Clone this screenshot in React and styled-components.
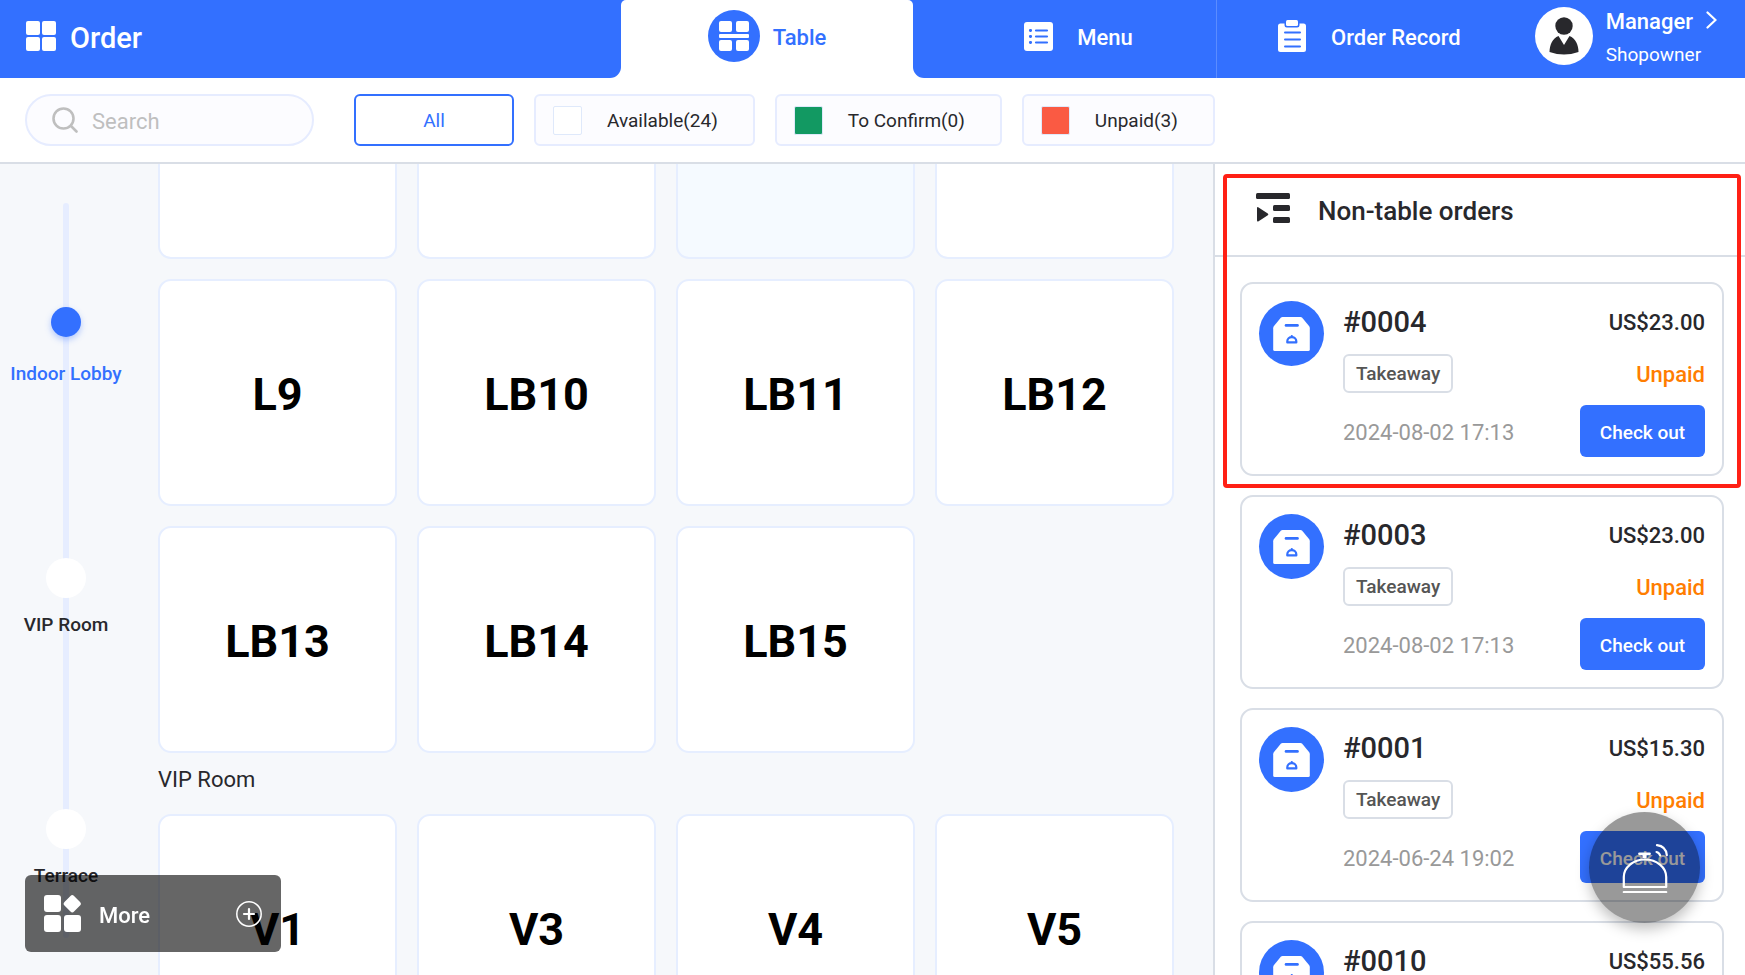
import React, { useLayoutEffect, useRef } from 'react';
import styled, { createGlobalStyle } from 'styled-components';

const areas = ['Indoor Lobby', 'VIP Room', 'Terrace'];

const lobbyTables = [
  { name: 'L5' },
  { name: 'L6' },
  { name: 'L7', tinted: true },
  { name: 'L8' },
  { name: 'L9' },
  { name: 'LB10' },
  { name: 'LB11' },
  { name: 'LB12' },
  { name: 'LB13' },
  { name: 'LB14' },
  { name: 'LB15' },
];

const vipTables = [{ name: 'V1' }, { name: 'V3' }, { name: 'V4' }, { name: 'V5' }];

const filters = [
  { label: 'Available(24)', color: '#ffffff' },
  { label: 'To Confirm(0)', color: '#129962' },
  { label: 'Unpaid(3)', color: '#fa5a43' },
];

const orders = [
  { id: '#0004', price: 'US$23.00', time: '2024-08-02 17:13' },
  { id: '#0003', price: 'US$23.00', time: '2024-08-02 17:13' },
  { id: '#0001', price: 'US$15.30', time: '2024-06-24 19:02' },
  { id: '#0010', price: 'US$55.56', time: '2024-06-24 19:02' },
];

const GridIcon = () => (
  <svg width="30" height="30" viewBox="0 0 30 30" fill="#fff">
    <rect x="0" y="0" width="14" height="14" rx="2" />
    <rect x="16" y="0" width="14" height="14" rx="2" />
    <rect x="0" y="16" width="14" height="14" rx="2" />
    <rect x="16" y="16" width="14" height="14" rx="2" />
  </svg>
)

const TableIcon = () => (
  <svg width="30" height="30" viewBox="0 0 30 30" fill="#fff">
    <rect x="0" y="0" width="13" height="11" rx="2" />
    <rect x="17" y="0" width="13" height="11" rx="2" />
    <rect x="0" y="13" width="30" height="4" rx="1" />
    <rect x="0" y="19" width="13" height="11" rx="2" />
    <rect x="17" y="19" width="13" height="11" rx="2" />
  </svg>
)

const MenuIcon = () => (
  <svg width="29" height="29" viewBox="0 0 29 29" fill="none">
    <rect width="29" height="29" rx="3" fill="#fff" />
    <g stroke="#3370ff" strokeWidth="2.2" strokeLinecap="round">
      <path d="M12 8.5h11M12 14.5h11M12 20.5h11" />
      <path d="M6.3 8.5h.4M6.3 14.5h.4M6.3 20.5h.4" strokeWidth="2.8" />
    </g>
  </svg>
)

const RecordIcon = () => (
  <svg width="28" height="32" viewBox="0 0 28 32" fill="none">
    <path
      d="M2.5 3.5H6.5V5.2q0 2.3 2.3 2.3h10.4q2.3 0 2.3-2.3V3.5h4Q28 3.5 28 6v23.5q0 2.5-2.5 2.5h-23Q0 32 0 29.5V6q0-2.5 2.5-2.5Z"
      fill="#fff"
    />
    <rect x="8" y="0" width="12" height="6" rx="1.5" fill="#fff" />
    <path d="M7 12.5h15M7 19.5h15M7 26.5h15" stroke="#3370ff" strokeWidth="2" strokeLinecap="round" />
  </svg>
)

const PersonIcon = () => (
  <svg width="30" height="38" viewBox="0 0 30 38" fill="#28282c">
    <circle cx="15" cy="9" r="8.7" />
    <path d="M9.5 19 15 28l5.5-9C26.5 21.5 29.5 28 29.5 35Q22 37.6 15 37.6T.5 35C.5 28 3.5 21.5 9.5 19Z" />
  </svg>
)

const ChevronIcon = () => (
  <svg width="11" height="18" viewBox="0 0 11 18" fill="none">
    <path d="m1.5 1.5 8 7.5-8 7.5" stroke="#fff" strokeWidth="2.2" strokeLinecap="round" />
  </svg>
)

const SearchIcon = () => (
  <svg width="26" height="26" viewBox="0 0 26 26" fill="none" stroke="#bfbfbf" strokeWidth="2.6" strokeLinecap="round">
    <circle cx="11.5" cy="11.5" r="10" />
    <path d="m19 19 5.5 5.5" />
  </svg>
)

const CollapseIcon = () => (
  <svg width="34" height="30" viewBox="0 0 34 30" fill="#28282c">
    <rect x="0" y="0" width="34" height="6" rx="1.5" />
    <rect x="17" y="12" width="17" height="6" rx="1.5" />
    <rect x="17" y="24" width="17" height="6" rx="1.5" />
    <path d="M1 15.3q0-2 1.6-.9l9.2 6q1.2.9 0 1.8l-9.2 6Q1 29.2 1 27.3Z" />
  </svg>
)

const BagIcon = () => (
  <svg width="37" height="34" viewBox="0 0 37 34" fill="none">
    <path d="M9.5 0h18q1 0 1.7.8L36 9q.8 1 .8 2.2V32.5q0 1.5-1.5 1.5H1.7Q.2 34 .2 32.5V11.2Q.2 10 1 9L7.8.8Q8.5 0 9.5 0Z" fill="#fff" />
    <path d="M13 8.4h11.5" stroke="#3370ff" strokeWidth="2.6" strokeLinecap="round" />
    <path
      d="M14.3 25.4v-1.2a4.5 4 0 0 1 9 0v1.2ZM18.8 19v1"
      stroke="#3370ff"
      strokeWidth="2.2"
      strokeLinejoin="round"
      strokeLinecap="round"
    />
  </svg>
)

const MoreIcon = () => (
  <svg width="37" height="37" viewBox="0 0 37 37" fill="#fff">
    <rect x="0" y="0" width="17" height="17" rx="3" />
    <rect x="0" y="20" width="17" height="17" rx="3" />
    <rect x="20" y="20" width="17" height="17" rx="3" />
    <rect x="21.5" y="2" width="13.5" height="13.5" rx="2.5" transform="rotate(45 28.25 8.75)" />
  </svg>
)

const PlusIcon = () => (
  <svg width="26" height="26" viewBox="0 0 26 26" fill="none" stroke="#fff">
    <circle cx="13" cy="13" r="12.2" strokeWidth="1.5" />
    <path d="M13 8v10M8 13h10" strokeWidth="2.2" strokeLinecap="round" />
  </svg>
)

const BellIcon = () => (
  <svg width="46" height="50" viewBox="0 0 46 50" fill="none" stroke="#fff" strokeWidth="2.2" strokeLinecap="round">
    <path d="M1.8 44V34a21.2 17.5 0 0 1 42.4 0v10Z" strokeLinejoin="round" />
    <path d="M1.8 49h42.4" />
    <path d="M17.5 10.8h10" strokeWidth="2.8" />
    <path d="M22.5 11.5v3.5" strokeWidth="4" strokeLinecap="butt" />
    <path d="M34.5 9q2.8.6 3.6 3.5M35 2.2q8.8 1 9.8 10" />
  </svg>
)

function OrderCard({ order }) {
  return (
    <Card>
      <BagCircle><BagIcon /></BagCircle>
      <CardBody>
        <CardRow>
          <OrderId>{order.id}</OrderId>
          <Price>{order.price}</Price>
        </CardRow>
        <CardRow>
          <Tag>Takeaway</Tag>
          <Status>Unpaid</Status>
        </CardRow>
        <CardRow>
          <Time>{order.time}</Time>
          <CheckOut type="button">Check out</CheckOut>
        </CardRow>
      </CardBody>
    </Card>
  )
}

function TableGrid({ tables }) {
  return (
    <Tables>
      {tables.map((t) => (
        <TableCard type="button" key={t.name} $tinted={t.tinted}>{t.name}</TableCard>
      ))}
    </Tables>
  )
}

function App() {
  const floor = useRef(null);

  useLayoutEffect(() => {
    floor.current.scrollTop = 132;
  }, []);

  return (
    <Page>
      <GlobalStyle />
      <Header>
        <Brand><GridIcon /><Label>Order</Label></Brand>
        <ActiveSlot>
          <ActiveTab type="button">
            <TabCircle><TableIcon /></TabCircle>
            <Label>Table</Label>
          </ActiveTab>
        </ActiveSlot>
        <MenuTab type="button"><MenuIcon /><Label>Menu</Label></MenuTab>
        <RecordTab type="button"><RecordIcon /><Label>Order Record</Label></RecordTab>
        <Account type="button">
          <Avatar><PersonIcon /></Avatar>
          <AccountText>
            <Name><Label>Manager</Label><ChevronIcon /></Name>
            <Role>Shopowner</Role>
          </AccountText>
        </Account>
      </Header>

      <Toolbar>
        <Search>
          <SearchIcon />
          <SearchInput type="text" placeholder="Search" aria-label="Search" />
        </Search>
        <Filters>
          <AllButton type="button">All</AllButton>
          {filters.map((f) => (
            <FilterButton type="button" key={f.label}>
              <Swatch $color={f.color} />
              {f.label}
            </FilterButton>
          ))}
        </Filters>
      </Toolbar>

      <Main>
        <AreaNav>
          {areas.map((area, i) => (
            <AreaButton type="button" key={area} $active={i === 0}>
              <DotSlot><Dot $active={i === 0} /></DotSlot>
              {area}
            </AreaButton>
          ))}
        </AreaNav>

        <Floor ref={floor}>
          <TableGrid tables={lobbyTables} />
          <SectionTitle>VIP Room</SectionTitle>
          <TableGrid tables={vipTables} />
        </Floor>

        <Panel>
          <PanelHeader>
            <CollapseIcon />
            <PanelTitle>Non-table orders</PanelTitle>
          </PanelHeader>
          <OrderList>
            {orders.map((o) => <OrderCard key={o.id} order={o} />)}
          </OrderList>
          <Highlight />
        </Panel>
      </Main>

      <MoreButton type="button">
        <MoreIcon />
        <MoreLabel>More</MoreLabel>
        <PlusIcon />
      </MoreButton>
      <BellButton type="button" aria-label="Call bell"><BellIcon /></BellButton>
    </Page>
  )
}

export default App

const GlobalStyle = createGlobalStyle`
  * {
    box-sizing: border-box;
  }

  body {
    margin: 0;
    font-family: Roboto, "Liberation Sans", sans-serif;
    color: #28282c;
  }

  button {
    margin: 0;
    padding: 0;
    border: 0;
    background: none;
    color: inherit;
    font: inherit;
    cursor: pointer;
  }

  svg {
    display: block;
    flex-shrink: 0;
  }
`

const Page = styled.div`
  display: flex;
  flex-direction: column;
  height: 100vh;
  overflow: hidden;
  background: #f6f8fb;
`

const Label = styled.span`
  padding-top: 3px;
`

const Header = styled.header`
  display: flex;
  flex-shrink: 0;
  height: 78px;
  background: #fff;
  font-size: 22px;
  font-weight: 500;
`

const Brand = styled.div`
  flex: 1;
  display: flex;
  align-items: center;
  gap: 14px;
  padding: 0 26px 6px;
  background: #3370ff;
  border-bottom-right-radius: 11px;
  color: #fff;
  font-size: 29px;
`

const ActiveSlot = styled.div`
  display: flex;
  width: 292px;
  background: linear-gradient(#3370ff 8px, #fff 8px);
`

const ActiveTab = styled.button`
  flex: 1;
  display: flex;
  align-items: center;
  justify-content: center;
  gap: 13px;
  padding-bottom: 6px;
  background: #fff;
  border-radius: 5px 5px 0 0;
  color: #3370ff;
`

const TabCircle = styled.span`
  display: flex;
  align-items: center;
  justify-content: center;
  width: 52px;
  height: 52px;
  border-radius: 50%;
  background: #3370ff;
`

const MenuTab = styled.button`
  display: flex;
  align-items: center;
  justify-content: center;
  gap: 24px;
  width: 304px;
  padding: 0 0 6px 28px;
  background: #3370ff;
  border-right: 1px solid #5b8cff;
  border-bottom-left-radius: 11px;
  color: #fff;
`

const RecordTab = styled.button`
  display: flex;
  align-items: center;
  gap: 25px;
  padding: 0 74px 6px 61px;
  background: #3370ff;
  color: #fff;
`

const Account = styled.button`
  display: flex;
  align-items: center;
  gap: 13px;
  padding: 0 28px 6px 0;
  background: #3370ff;
  color: #fff;
  text-align: left;
`

const Avatar = styled.span`
  display: flex;
  align-items: center;
  justify-content: center;
  width: 58px;
  height: 58px;
  border-radius: 50%;
  background: #fff;
`

const AccountText = styled.span`
  display: flex;
  flex-direction: column;
  gap: 8px;
`

const Name = styled.span`
  display: flex;
  align-items: center;
  gap: 13px;
  line-height: 26px;
`

const Role = styled.span`
  font-size: 19px;
  font-weight: 400;
  line-height: 24px;
`

const Toolbar = styled.div`
  display: flex;
  flex-shrink: 0;
  gap: 40px;
  padding: 16px 25px;
  background: #fff;
  border-bottom: 2px solid #d9dee6;
`

const Search = styled.label`
  display: flex;
  align-items: center;
  gap: 14px;
  width: 289px;
  height: 52px;
  padding: 0 25px;
  background: #fcfcff;
  border: 2px solid #e6ecff;
  border-radius: 26px;
`

const SearchInput = styled.input`
  flex: 1;
  min-width: 0;
  padding: 3px 0 0;
  border: 0;
  outline: 0;
  background: none;
  font-family: inherit;
  font-size: 22px;
  color: #28282c;

  &::placeholder {
    color: #bfbfbf;
  }
`

const Filters = styled.div`
  display: flex;
  gap: 20px;
`

const AllButton = styled.button`
  width: 160px;
  height: 52px;
  padding-top: 1px;
  background: #fff;
  border: 2px solid #3370ff;
  border-radius: 6px;
  color: #3370ff;
  font-size: 19px;
`

const FilterButton = styled.button`
  display: flex;
  align-items: center;
  gap: 25px;
  height: 52px;
  padding: 0 35px 0 17px;
  background: #fcfcff;
  border: 2px solid #e6ecff;
  border-radius: 6px;
  font-size: 19px;
`

const Swatch = styled.span`
  width: 29px;
  height: 29px;
  background: ${(p) => p.$color};
  border: 1px solid #dfe9fb;
  border-radius: 2px;
`

const Main = styled.main`
  display: flex;
  flex: 1;
  min-height: 0;
`

const AreaNav = styled.nav`
  position: relative;
  flex-shrink: 0;
  width: 132px;
  padding-top: 143px;

  &::before {
    content: "";
    position: absolute;
    top: 39px;
    left: 63px;
    width: 6px;
    height: 735px;
    border-radius: 3px;
    background: #e6edff;
  }
`

const AreaButton = styled.button`
  position: relative;
  display: flex;
  flex-direction: column;
  align-items: center;
  gap: 15px;
  width: 100%;
  height: 251px;
  color: ${(p) => (p.$active ? '#3370ff' : '#28282c')};
  font-size: 19px;
  font-weight: 500;
  line-height: 24px;
  white-space: nowrap;
`

const DotSlot = styled.span`
  height: 40px;
`

const Dot = styled.span`
  display: block;
  width: ${(p) => (p.$active ? 30 : 40)}px;
  height: ${(p) => (p.$active ? 30 : 40)}px;
  border-radius: 50%;
  background: ${(p) => (p.$active ? '#3370ff' : '#fff')};
  box-shadow: ${(p) => (p.$active ? '0 3px 6px rgba(51, 112, 255, .35)' : 'none')};
`

const Floor = styled.section`
  flex: 1;
  min-width: 0;
  padding: 0 39px 0 26px;
  overflow-y: auto;
  scrollbar-width: none;
`

const Tables = styled.div`
  display: grid;
  grid-template-columns: repeat(4, 1fr);
  gap: 20px;
`

const TableCard = styled.button`
  height: 227px;
  padding-top: 4px;
  background: ${(p) => (p.$tinted ? '#f5faff' : '#fff')};
  border: 2px solid #e6eeff;
  border-radius: 13px;
  color: #000;
  font-size: 45px;
  font-weight: 700;
`

const SectionTitle = styled.h2`
  margin: 0;
  padding: 14px 0 21px;
  font-size: 22px;
  font-weight: 400;
  line-height: 26px;
`

const Panel = styled.aside`
  position: relative;
  flex-shrink: 0;
  width: 532px;
  overflow: hidden;
  background: #fff;
  border-left: 2px solid #d9dee6;
`

const PanelHeader = styled.div`
  display: flex;
  align-items: center;
  gap: 28px;
  height: 93px;
  padding: 0 41px 3px;
  border-bottom: 2px solid #d9dee6;
`

const PanelTitle = styled.h2`
  margin: 0;
  padding-top: 5px;
  font-size: 26px;
  font-weight: 500;
`

const OrderList = styled.div`
  display: flex;
  flex-direction: column;
  gap: 19px;
  padding: 25px 21px 0 25px;
`

const Highlight = styled.div`
  position: absolute;
  top: 10px;
  left: 8px;
  right: 4px;
  height: 314px;
  border: 4px solid #ff2015;
  border-radius: 4px;
  pointer-events: none;
`

const Card = styled.article`
  display: flex;
  gap: 19px;
  padding: 17px;
  background: #fff;
  border: 2px solid #d9dee6;
  border-radius: 13px;
`

const BagCircle = styled.div`
  display: flex;
  flex-shrink: 0;
  align-items: center;
  justify-content: center;
  width: 65px;
  height: 65px;
  border-radius: 50%;
  background: #3370ff;
`

const CardBody = styled.div`
  flex: 1;
  display: flex;
  flex-direction: column;
  gap: 12px;
`

const CardRow = styled.div`
  display: flex;
  align-items: center;
  justify-content: space-between;
  min-height: 40px;
`

const OrderId = styled.span`
  padding-top: 2px;
  font-size: 29px;
  font-weight: 500;
`

const Price = styled(Label)`
  font-size: 22px;
  font-weight: 500;
`

const Tag = styled.span`
  padding: 6px 11px;
  border: 2px solid #d9dee6;
  border-radius: 6px;
  color: #555;
  font-size: 19px;
  font-weight: 500;
  line-height: 23px;
`

const Status = styled(Label)`
  color: #ff7d00;
  font-size: 22px;
  font-weight: 500;
`

const Time = styled.time`
  padding-top: 3px;
  color: #999;
  font-size: 22px;
`

const CheckOut = styled.button`
  width: 125px;
  height: 52px;
  padding-top: 2px;
  border-radius: 6px;
  background: #3370ff;
  color: #fff;
  font-size: 19px;
  font-weight: 500;
`

const MoreButton = styled.button`
  position: fixed;
  left: 25px;
  bottom: 23px;
  display: flex;
  align-items: center;
  gap: 18px;
  width: 256px;
  height: 77px;
  padding: 0 19px;
  border-radius: 6px;
  background: rgba(0, 0, 0, .6);
  color: #fff;
  font-size: 22px;
  font-weight: 500;
`

const MoreLabel = styled(Label)`
  flex: 1;
  text-align: left;
`

const BellButton = styled.button`
  position: fixed;
  right: 45px;
  bottom: 52px;
  display: flex;
  align-items: center;
  justify-content: center;
  width: 111px;
  height: 111px;
  border-radius: 50%;
  background: rgba(0, 0, 0, .4);
  box-shadow: 0 6px 14px rgba(0, 0, 0, .25);
`
